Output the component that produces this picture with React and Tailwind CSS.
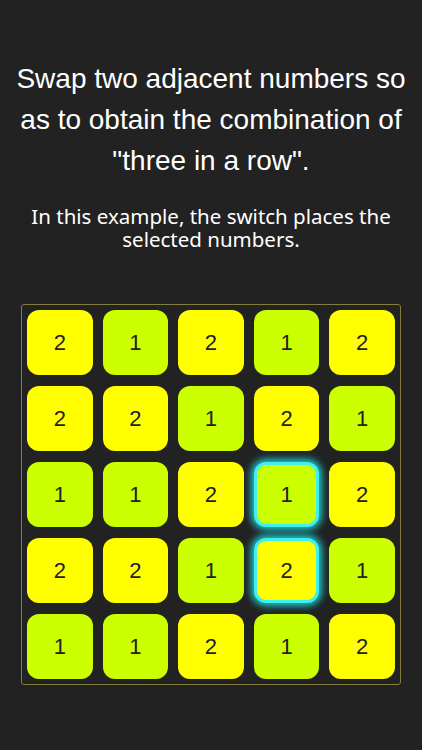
import React from "react";

const board = [
  [2, 1, 2, 1, 2],
  [2, 2, 1, 2, 1],
  [1, 1, 2, 1, 2],
  [2, 2, 1, 2, 1],
  [1, 1, 2, 1, 2],
];

// the two tiles being swapped in the example
const selected = ["2-3", "3-3"];

function Tile({ value, active }) {
  return (
    <div
      className={`flex h-[65px] items-center justify-center rounded-[12px] font-['Liberation_Sans',Arial,sans-serif] text-[22px] text-[#222] ${
        value === 2 ? "bg-[#ffff00]" : "bg-[#ccff00]"
      } ${
        active
          ? "border-[3px] border-[#3ef0f0] shadow-[0_0_7px_3px_#1cc9cc]"
          : ""
      }`}
    >
      {value}
    </div>
  );
}

export default function App() {
  return (
    <div className="min-h-[750px] w-full bg-[#222222] pt-[58px]">
      <h1 className="px-3 text-center font-['Liberation_Sans',Arial,sans-serif] text-[28px] leading-[41px] text-white">
        Swap two adjacent numbers so as to obtain the combination of "three in
        a row".
      </h1>

      <p className="mt-[24px] px-[26px] text-center font-['Noto_Sans',sans-serif] text-[20.5px] leading-[23px] text-white">
        In this example, the switch places the selected numbers.
      </p>

      <div className="mt-[53px] ml-[21px] grid w-[380px] grid-cols-5 gap-x-[10px] gap-y-[11px] rounded-[3px] border border-[#857d3c] p-[5px]">
        {board.map((row, r) =>
          row.map((v, c) => (
            <Tile
              key={`${r}-${c}`}
              value={v}
              active={selected.includes(`${r}-${c}`)}
            />
          )),
        )}
      </div>
    </div>
  );
}
